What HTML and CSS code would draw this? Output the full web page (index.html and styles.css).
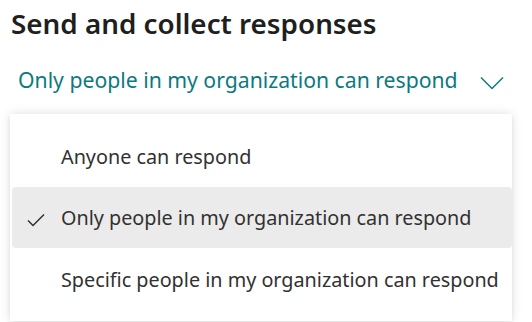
FILE: index.html
```html
<!DOCTYPE html>
<html lang="en">
<head>
<meta charset="utf-8">
<link rel="stylesheet" href="styles.css">
</head>
<body>
<div class="page">
  <h1 class="title">Send and collect responses</h1>
  <div class="picker">
    <button class="picker-btn" type="button">
      <span class="picker-label">Only people in my organization can respond</span>
      <svg class="chev" width="24" height="14" viewBox="0 0 24 14" aria-hidden="true">
        <path d="M1 1.5 L12 12.5 L23 1.5" fill="none" stroke="#0b7a80" stroke-width="1.5"/>
      </svg>
    </button>
    <ul class="menu">
      <li class="item">Anyone can respond</li>
      <li class="item selected">
        <svg class="check" width="18" height="14" viewBox="0 0 18 14" aria-hidden="true">
          <path d="M1 7.5 L6 12.5 L17 1.5" fill="none" stroke="#323130" stroke-width="1.5"/>
        </svg>
        Only people in my organization can respond
      </li>
      <li class="item">Specific people in my organization can respond</li>
    </ul>
  </div>
</div>
</body>
</html>
```
FILE: styles.css
```css
html, body {
  margin: 0;
  padding: 0;
  background: #ffffff;
}
body {
  font-family: "Noto Sans", "Open Sans", "Liberation Sans", sans-serif;
  width: 532px;
  height: 322px;
  overflow: hidden;
}
.page {
  padding: 2px 0 0 11px;
}
.title {
  margin: 0;
  font-size: 27.8px;
  font-weight: 600;
  line-height: 42px;
  color: #201f1e;
}
.picker {
  position: relative;
  margin-top: 16px;
}
.picker-btn {
  display: flex;
  align-items: center;
  width: 503px;
  height: 40px;
  padding: 0 0 0 7px;
  border: none;
  background: transparent;
  font-family: inherit;
  cursor: pointer;
}
.picker-label {
  font-size: 21.2px;
  color: #0b7a80;
  line-height: 26px;
}
.chev {
  margin-left: auto;
  margin-right: 10px;
  margin-top: 6px;
}
.menu {
  position: absolute;
  left: -1px;
  top: 54px;
  width: 502px;
  margin: 0;
  padding: 11px 0 11px;
  list-style: none;
  background: #ffffff;
  box-shadow: 0 0 10px rgba(0, 0, 0, 0.12), 0 2px 4px rgba(0, 0, 0, 0.06);
}
.item {
  position: relative;
  display: flex;
  align-items: center;
  height: 62px;
  margin: 0 0 0 2px;
  padding-left: 49px;
  font-size: 19.8px;
  color: #323130;
  border-radius: 4px;
}
.item.selected {
  background: #ebebeb;
  height: 61px;
}
.check {
  position: absolute;
  left: 15px;
  top: 26px;
}
```
